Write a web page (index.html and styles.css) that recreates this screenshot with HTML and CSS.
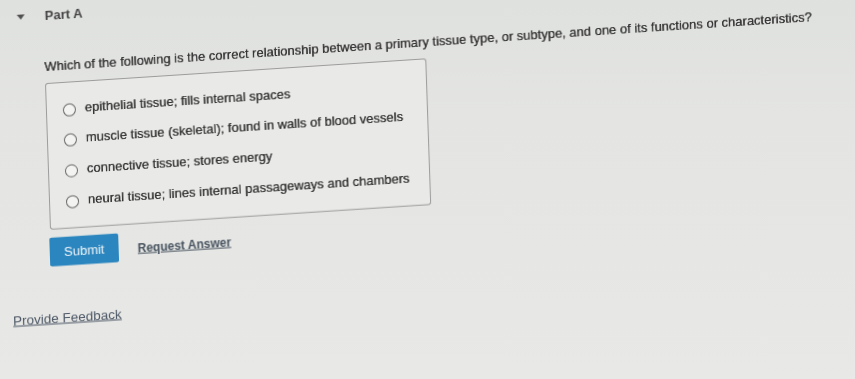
FILE: index.html
```html
<!DOCTYPE html>
<html>
<head>
<meta charset="utf-8">
<link rel="stylesheet" href="styles.css">
</head>
<body>
<div class="page">
  <div class="header">
    <span class="caret"></span>
    <span class="part">Part A</span>
  </div>
  <p class="question">Which of the following is the correct relationship between a primary tissue type, or subtype, and one of its functions or characteristics?</p>
  <div class="choices">
    <label class="choice"><span class="radio"></span><span class="label">epithelial tissue; fills internal spaces</span></label>
    <label class="choice"><span class="radio"></span><span class="label">muscle tissue (skeletal); found in walls of blood vessels</span></label>
    <label class="choice"><span class="radio"></span><span class="label">connective tissue; stores energy</span></label>
    <label class="choice"><span class="radio"></span><span class="label">neural tissue; lines internal passageways and chambers</span></label>
  </div>
  <div class="actions">
    <span class="submit">Submit</span>
    <a class="request">Request Answer</a>
  </div>
  <a class="feedback">Provide Feedback</a>
</div>
</body>
</html>
```
FILE: styles.css
```css
html, body {
  margin: 0;
  padding: 0;
}
body {
  width: 855px;
  height: 379px;
  overflow: hidden;
  background: linear-gradient(180deg, #dfe1de 0px, #e4e5e2 120px, #e8e8e6 379px);
  font-family: "Liberation Sans", Arial, sans-serif;
  color: #333;
}
.page {
  width: 855px;
  height: 379px;
  transform-origin: 45px 83px;
  transform: matrix(0.998, -0.065, 0.034, 0.998, 0, 0);
  filter: blur(0.3px);
}
.header {
  height: 30px;
  display: flex;
  align-items: center;
  padding-left: 19px;
}
.caret {
  width: 0;
  height: 0;
  border-left: 4px solid transparent;
  border-right: 4px solid transparent;
  border-top: 5px solid #505050;
  margin-right: 20px;
}
.part {
  font-size: 13px;
  font-weight: bold;
  color: #454545;
}
.question {
  margin: 29px 0 0 45px;
  font-size: 13px;
  line-height: 16px;
  white-space: nowrap;
  color: #333;
  text-shadow: 0 0 0.6px #333;
}
.choices {
  box-sizing: border-box;
  margin: 8px 0 0 45px;
  width: 382px;
  padding: 12px 0 11px 16px;
  border: 1px solid #9c9c9c;
  border-radius: 3px;
  background: #e9e9e7;
}
.choice {
  height: 30.6px;
  display: flex;
  align-items: center;
}
.radio {
  box-sizing: border-box;
  width: 13px;
  height: 13px;
  border-radius: 50%;
  border: 1.5px solid #6a6a6a;
  background: #f3f3f2;
  margin-right: 9px;
  flex: none;
}
.label {
  font-size: 13px;
  line-height: 14px;
  margin-top: -3px;
  color: #333;
  text-shadow: 0 0 0.6px #333;
}
.actions {
  margin: 8px 0 0 44px;
  display: flex;
  align-items: center;
  height: 29px;
}
.submit {
  width: 69px;
  height: 29px;
  display: flex;
  align-items: center;
  justify-content: center;
  background: #2b86bf;
  color: #f2f6f9;
  font-size: 13px;
  border-radius: 2px;
}
.request {
  margin-left: 19px;
  font-size: 12px;
  font-weight: bold;
  color: #46525e;
  text-decoration: underline;
  margin-top: 2px;
}
.feedback {
  display: block;
  margin: 44px 0 0 5px;
  font-size: 13.5px;
  line-height: 16px;
  color: #4d5866;
  text-decoration: underline;
  width: max-content;
}
```
